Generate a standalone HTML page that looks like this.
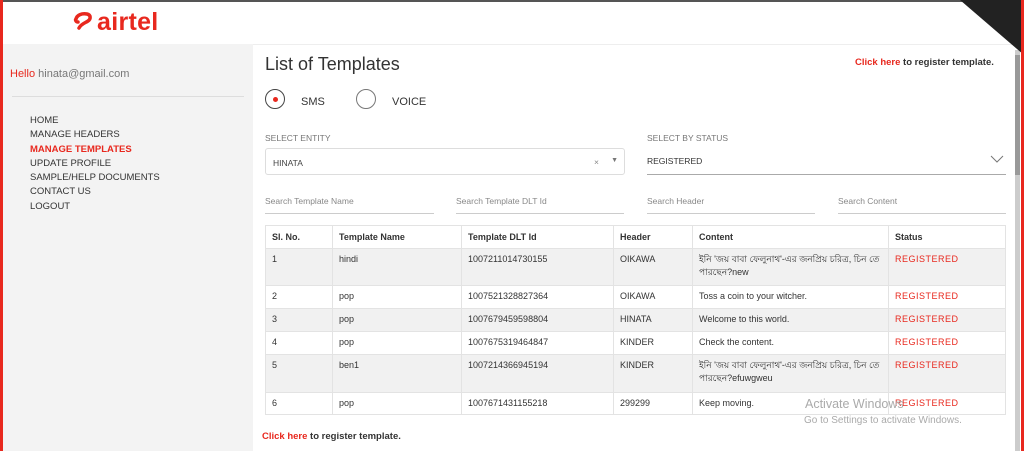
<!DOCTYPE html>
<html><head><meta charset="utf-8"><style>
*{margin:0;padding:0;box-sizing:border-box}
body{width:1024px;height:451px;overflow:hidden;background:#fff;font-family:"Liberation Sans",sans-serif;position:relative;color:#333}
.abs{position:absolute}
.topline{left:0;top:0;width:1024px;height:2px;background:#555}
.lred{left:0;top:0;width:3px;height:451px;background:#e8281e}
.rred{left:1021px;top:0;width:3px;height:451px;background:#e8281e}
.scroll{left:1015px;top:50px;width:5px;height:401px;background:#ccc}
.scroll2{left:1015px;top:55px;width:5px;height:120px;background:#999}
.tri{left:960px;top:0;width:0;height:0;border-top:55px solid #222;border-left:64px solid transparent}
.side{left:3px;top:44px;width:250px;height:407px;background:#f3f3f3}
.hdrline{left:253px;top:44px;width:762px;height:1px;background:#eee}
.logo{left:97px;top:8px;font-size:25px;font-weight:bold;color:#e8281e;letter-spacing:0.3px}
.nav{left:30px;top:114px;font-size:9.5px;line-height:14.3px;color:#333}
.nav .a{color:#e8281e;font-weight:bold}
.in{border-bottom:1px solid #ccc;font-size:8.5px;color:#888;height:20px;line-height:14px}
table{border-collapse:collapse;font-size:9px;color:#333}
td,th{border:1px solid #e3e3e3;padding:5px 6px;text-align:left;vertical-align:top}
th{font-weight:bold;height:23px;padding-top:6px}
tr.g td{background:#f1f1f1}
.r{color:#e8281e;letter-spacing:.5px}
.radio{width:20px;height:20px;border:1.5px solid #444;border-radius:50%}
.lk{font-size:9.5px;font-weight:bold;color:#333}
</style></head><body>
<div class="abs topline"></div>
<div class="abs side"></div>
<div class="abs hdrline"></div>
<svg class="abs" style="left:73px;top:11px" width="20" height="20" viewBox="0 0 20 20"><path d="M3 8C4 4 9 2 14 3C18 4 18 8 15 10C12 12 8 13 6 17M5 11C3 11 2 9 3 8" fill="none" stroke="#e8281e" stroke-width="3.5" stroke-linecap="round"/></svg>
<div class="abs logo">airtel</div>
<div class="abs" style="left:10px;top:68px;font-size:11px;color:#777"><span style="color:#e8281e">Hello</span> hinata@gmail.com</div>
<div class="abs" style="left:12px;top:96px;width:232px;height:1px;background:#ddd"></div>
<div class="abs nav">HOME<br>MANAGE HEADERS<br><span class="a">MANAGE TEMPLATES</span><br>UPDATE PROFILE<br>SAMPLE/HELP DOCUMENTS<br>CONTACT US<br>LOGOUT</div>
<div class="abs" style="left:265px;top:54px;font-size:18px;color:#333">List of Templates</div>
<div class="abs lk" style="left:855px;top:57px"><span style="color:#e8281e">Click here</span> to register template.</div>
<div class="abs radio" style="left:265px;top:89px"></div>
<div class="abs" style="left:272.5px;top:96.5px;width:5px;height:5px;border-radius:50%;background:#e8281e"></div>
<div class="abs" style="left:301px;top:96px;font-size:11px">SMS</div>
<div class="abs radio" style="left:356px;top:89px;border-color:#777;border-width:1px"></div>
<div class="abs" style="left:392px;top:96px;font-size:11px">VOICE</div>
<div class="abs" style="left:265px;top:133px;font-size:8.5px;color:#777">SELECT ENTITY</div>
<div class="abs" style="left:265px;top:148px;width:360px;height:27px;border:1px solid #ddd;border-radius:3px;font-size:8.5px;padding:9px 7px;color:#444">HINATA<span style="position:absolute;right:25px;top:8px;color:#888">×</span><span style="position:absolute;right:6px;top:8px;color:#777;font-size:7px">▼</span></div>
<div class="abs" style="left:647px;top:133px;font-size:8.5px;color:#777">SELECT BY STATUS</div>
<div class="abs" style="left:647px;top:150px;width:359px;height:25px;border-bottom:1px solid #aaa;font-size:8.5px;padding-top:6px;color:#333">REGISTERED<svg style="position:absolute;right:2px;top:5px" width="14" height="9"><path d="M1 1L7 7L13 1" fill="none" stroke="#777" stroke-width="1"/></svg></div>
<div class="abs in" style="left:265px;top:194px;width:169px">Search Template Name</div>
<div class="abs in" style="left:456px;top:194px;width:168px">Search Template DLT Id</div>
<div class="abs in" style="left:647px;top:194px;width:168px">Search Header</div>
<div class="abs in" style="left:838px;top:194px;width:168px">Search Content</div>
<table class="abs" style="left:265px;top:225px;width:741px">
<tr><th style="width:67px">Sl. No.</th><th style="width:129px">Template Name</th><th style="width:152px">Template DLT Id</th><th style="width:79px">Header</th><th style="width:196px">Content</th><th>Status</th></tr>
<tr class="g" style="height:37px"><td>1</td><td>hindi</td><td>1007211014730155</td><td>OIKAWA</td><td style="line-height:13px;padding-top:4px">ইনি 'জয় বাবা ফেলুনাথ'-এর জনপ্রিয় চরিত্র, চিন তে পারছেন?new</td><td class="r">REGISTERED</td></tr>
<tr style="height:23px"><td>2</td><td>pop</td><td>1007521328827364</td><td>OIKAWA</td><td>Toss a coin to your witcher.</td><td class="r">REGISTERED</td></tr>
<tr class="g" style="height:23px"><td>3</td><td>pop</td><td>1007679459598804</td><td>HINATA</td><td>Welcome to this world.</td><td class="r">REGISTERED</td></tr>
<tr style="height:23px"><td>4</td><td>pop</td><td>1007675319464847</td><td>KINDER</td><td>Check the content.</td><td class="r">REGISTERED</td></tr>
<tr class="g" style="height:38px"><td>5</td><td>ben1</td><td>1007214366945194</td><td>KINDER</td><td style="line-height:13px;padding-top:4px">ইনি 'জয় বাবা ফেলুনাথ'-এর জনপ্রিয় চরিত্র, চিন তে পারছেন?efuwgweu</td><td class="r">REGISTERED</td></tr>
<tr style="height:22px"><td>6</td><td>pop</td><td>1007671431155218</td><td>299299</td><td>Keep moving.</td><td class="r">REGISTERED</td></tr>
</table>
<div class="abs" style="left:805px;top:397px;font-size:12.5px;color:#aaa">Activate Windows</div>
<div class="abs" style="left:804px;top:415px;font-size:10px;color:#aaa">Go to Settings to activate Windows.</div>
<div class="abs lk" style="left:262px;top:431px"><span style="color:#e8281e">Click here</span> to register template.</div>
<div class="abs scroll"></div><div class="abs scroll2"></div>
<div class="abs tri"></div>
<div class="abs lred"></div><div class="abs rred"></div>
</body></html>
